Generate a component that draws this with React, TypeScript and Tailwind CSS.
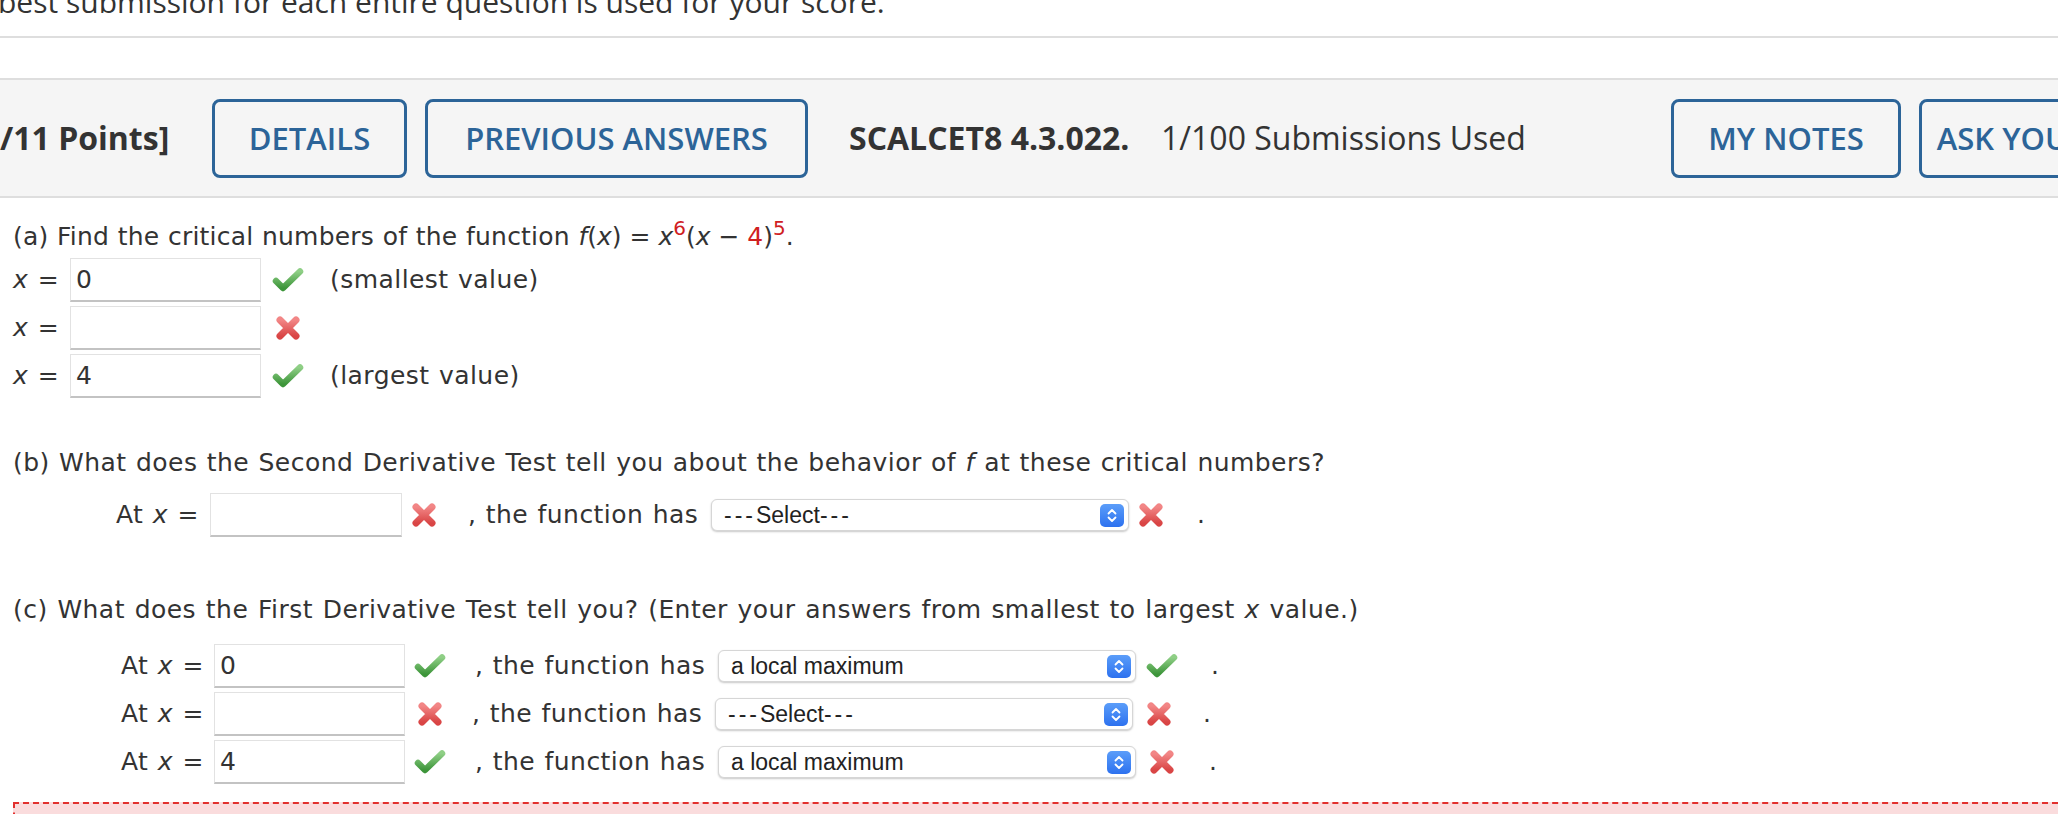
import { useId } from "react";

const blue = "border-[#2c6498] text-[#2c6498]";

function Check() {
  const id = useId();
  return (
    <svg width="32" height="26" viewBox="0 0 32 26">
      <defs>
        <linearGradient id={id} x1="0" y1="0" x2="0" y2="1">
          <stop offset="0" stopColor="#8fcf86" />
          <stop offset="1" stopColor="#3d953a" />
        </linearGradient>
      </defs>
      <path
        d="M4 14 L11 21 L28 4.5"
        fill="none"
        stroke={`url(#${id})`}
        strokeWidth="6.5"
        strokeLinecap="round"
        strokeLinejoin="round"
      />
    </svg>
  );
}

function Cross() {
  const id = useId();
  return (
    <svg width="28" height="28" viewBox="0 0 28 28">
      <defs>
        <linearGradient id={id} x1="0" y1="0" x2="0" y2="1">
          <stop offset="0" stopColor="#f28686" />
          <stop offset="1" stopColor="#d94545" />
        </linearGradient>
      </defs>
      <path
        d="M6 6 L22 22 M22 6 L6 22"
        fill="none"
        stroke={`url(#${id})`}
        strokeWidth="7"
        strokeLinecap="round"
      />
    </svg>
  );
}

function Mark({ ok }: { ok: boolean }) {
  return (
    <span className="flex h-[32px] w-[32px] shrink-0 items-center justify-center">
      {ok ? <Check /> : <Cross />}
    </span>
  );
}

function Field({ value, w }: { value: string; w: string }) {
  return (
    <div
      className={`flex h-[44px] ${w} shrink-0 items-center border border-[#e2e2e2] border-b-2 border-b-[#c3c3c3] bg-white pl-[5px]`}
    >
      {value}
    </div>
  );
}

// macOS-style popup; hyphens are a bit wider in the system font
function Select({ value }: { value: string }) {
  const placeholder = value === "---Select---";
  return (
    <div className="flex h-[32px] w-[418px] shrink-0 items-center justify-between rounded-[6px] border border-[#d6d6d6] bg-white pl-[12px] pr-[4px] tracking-normal [word-spacing:0] shadow-[0_1px_2px_rgba(0,0,0,0.22)]">
      <span className="font-['Liberation_Sans',Arial,sans-serif] text-[23px] leading-none text-[#222]">
        {placeholder ? (
          <>
            <span className="tracking-[3px]">---</span>Select
            <span className="tracking-[3px]">---</span>
          </>
        ) : (
          value
        )}
      </span>
      <span className="flex h-[23px] w-[24px] items-center justify-center rounded-[5px] bg-linear-to-b from-[#5b9df9] to-[#2d71ef]">
        <svg width="24" height="23" viewBox="0 0 24 23">
          <path
            d="M8.5 9.5 L12 6 L15.5 9.5 M8.5 13.5 L12 17 L15.5 13.5"
            fill="none"
            stroke="#fff"
            strokeWidth="1.8"
            strokeLinecap="round"
            strokeLinejoin="round"
          />
        </svg>
      </span>
    </div>
  );
}

const X = () => <i>x</i>;

export default function App() {
  return (
    <div className="h-[814px] w-[2058px] overflow-hidden bg-white text-[#333]">
      <div className="h-[38px] overflow-hidden border-b-2 border-[#dedede]">
        <p className="-mt-[13px] -ml-[2px] whitespace-nowrap font-['Open_Sans',sans-serif] text-[30px] leading-[30px]">
          best submission for each entire question is used for your score.
        </p>
      </div>
      <div className="h-[40px]" />

      <div className="flex h-[120px] items-center overflow-hidden border-y-2 border-[#dedede] bg-[#f5f5f5] font-['Open_Sans',sans-serif] text-[32px] whitespace-nowrap">
        <div className="flex w-[1671px] shrink-0 items-center">
          <span className="w-[212px] shrink-0 font-bold">/11 Points]</span>
          <button
            type="button"
            className={`h-[79px] w-[195px] shrink-0 rounded-[8px] border-[3px] text-[31px] font-semibold ${blue}`}
          >
            DETAILS
          </button>
          <button
            type="button"
            className={`ml-[18px] h-[79px] w-[383px] shrink-0 rounded-[8px] border-[3px] text-[31px] font-semibold ${blue}`}
          >
            PREVIOUS ANSWERS
          </button>
          <span className="ml-[41px] w-[312px] shrink-0 font-bold">SCALCET8 4.3.022.</span>
          <span>1/100 Submissions Used</span>
        </div>
        <button
          type="button"
          className={`h-[79px] w-[230px] shrink-0 rounded-[8px] border-[3px] text-[31px] font-semibold ${blue}`}
        >
          MY NOTES
        </button>
        <button
          type="button"
          className={`ml-[18px] h-[79px] w-[330px] shrink-0 rounded-[8px] border-[3px] text-[31px] font-semibold ${blue}`}
        >
          ASK YOUR TEACHER
        </button>
      </div>

      <div className="pl-[13px] pt-[21px] font-['DejaVu_Sans',Verdana,sans-serif] text-[25px] leading-[36px] tracking-[0.45px] [word-spacing:1px] whitespace-nowrap">
        <p className="h-[36px] tracking-[0.2px] [word-spacing:0.5px]">
          (a) Find the critical numbers of the function{" "}
          <span className="tracking-normal [word-spacing:0]">
            <i>f</i>(<X />) = <X />
            <span className="relative -top-[10px] text-[20px] leading-none text-[#d0201f]">6</span>(
            <X /> − <span className="text-[#d0201f]">4</span>)
            <span className="relative -top-[10px] text-[20px] leading-none text-[#d0201f]">5</span>.
          </span>
        </p>

        <div className="mt-[1px]">
          {[
            { v: "0", ok: true, note: "(smallest value)" },
            { v: "", ok: false, note: "" },
            { v: "4", ok: true, note: "(largest value)" },
          ].map((r, i) => (
            <div key={i} className="flex h-[48px] items-center">
              <span className="w-[57px] shrink-0">
                <X /> =
              </span>
              <Field value={r.v} w="w-[191px]" />
              <span className="ml-[11px]">
                <Mark ok={r.ok} />
              </span>
              <span className="ml-[26px]">{r.note}</span>
            </div>
          ))}
        </div>

        <p className="mt-[45px] h-[36px]">
          (b) What does the Second Derivative Test tell you about the behavior of <i>f</i> at these
          critical numbers?
        </p>
        <div className="mt-[10px] flex h-[48px] items-center">
          <span className="ml-[103px] w-[94px] shrink-0">
            At <X /> =
          </span>
          <Field value="" w="w-[192px]" />
          <span className="ml-[6px]">
            <Mark ok={false} />
          </span>
          <span className="ml-[28px] w-[243px] shrink-0">, the function has</span>
          <Select value="---Select---" />
          <span className="ml-[6px]">
            <Mark ok={false} />
          </span>
          <span className="ml-[30px]">.</span>
        </div>

        <p className="mt-[53px] h-[36px] [word-spacing:1.4px]">
          (c) What does the First Derivative Test tell you? (Enter your answers from smallest to
          largest <X /> value.)
        </p>
        <div className="mt-[14px]">
          {[
            { v: "0", ok: true, s: "a local maximum", ok2: true, shift: "ml-[29px]", dot: "ml-[33px]" },
            { v: "", ok: false, s: "---Select---", ok2: false, shift: "ml-[26px]", dot: "ml-[28px]" },
            { v: "4", ok: true, s: "a local maximum", ok2: false, shift: "ml-[29px]", dot: "ml-[31px]" },
          ].map((r, i) => (
            <div key={i} className="flex h-[48px] items-center">
              <span className="ml-[108px] w-[93px] shrink-0">
                At <X /> =
              </span>
              <Field value={r.v} w="w-[191px]" />
              <span className="ml-[9px]">
                <Mark ok={r.ok} />
              </span>
              <span className={`${r.shift} w-[243px] shrink-0`}>, the function has</span>
              <Select value={r.s} />
              <span className="ml-[10px]">
                <Mark ok={r.ok2} />
              </span>
              <span className={r.dot}>.</span>
            </div>
          ))}
        </div>

        <div className="mt-[16px] -mr-[40px] h-[80px] border-2 border-dashed border-[#e2302e] bg-[#fadcdd]" />
      </div>
    </div>
  );
}
